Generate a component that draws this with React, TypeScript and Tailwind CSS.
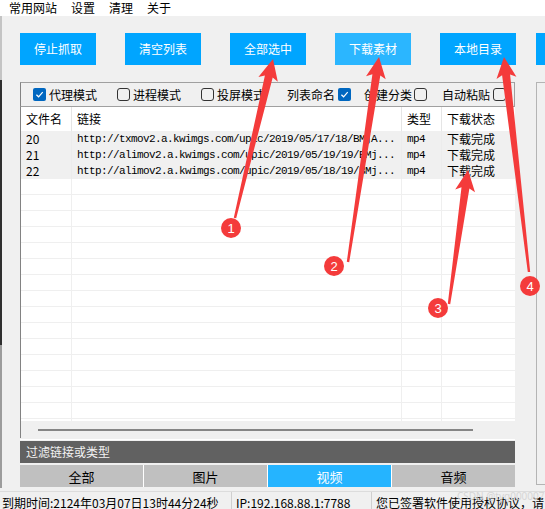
import React from 'react';

type Pt = [number, number];

const rows = [
  { id: '20', url: 'http://txmov2.a.kwimgs.com/upic/2019/05/17/18/BMjA...', type: 'mp4', status: '下载完成' },
  { id: '21', url: 'http://alimov2.a.kwimgs.com/upic/2019/05/19/19/BMj...', type: 'mp4', status: '下载完成' },
  { id: '22', url: 'http://alimov2.a.kwimgs.com/upic/2019/05/18/19/BMj...', type: 'mp4', status: '下载完成' },
];

const buttons = [
  { label: '停止抓取', ml: 'ml-0', active: false },
  { label: '清空列表', ml: 'ml-[29px]', active: false },
  { label: '全部选中', ml: 'ml-[29px]', active: false },
  { label: '下载素材', ml: 'ml-[29px]', active: true },
  { label: '本地目录', ml: 'ml-[29px]', active: false },
  { label: '', ml: 'ml-[20px]', active: false },
];

const tabs = ['全部', '图片', '视频', '音频'];

// callouts: numbered badge, where the shaft starts, where the head points
const callouts: { n: number; c: Pt; tail: Pt; tip: Pt }[] = [
  { n: 1, c: [231, 228], tail: [235, 218], tip: [273, 59] },
  { n: 2, c: [334, 266], tail: [348, 262], tip: [379, 57] },
  { n: 3, c: [438, 308], tail: [449, 304], tip: [468, 170] },
  { n: 4, c: [530, 286], tail: [529, 272], tip: [504, 57] },
];

function arrowPoints(tail: Pt, tip: Pt) {
  const dx = tip[0] - tail[0];
  const dy = tip[1] - tail[1];
  const len = Math.hypot(dx, dy);
  const ux = dx / len;
  const uy = dy / len;
  const nx = -uy;
  const ny = ux;
  const headLen = 18;
  const headHalf = 10;
  const back = 3;
  const shaftTop = 4;
  const shaftBot = 1.2;
  const bx = tip[0] - ux * headLen;
  const by = tip[1] - uy * headLen;
  const pts: Pt[] = [
    tip,
    [bx + nx * headHalf - ux * back, by + ny * headHalf - uy * back],
    [bx + nx * shaftTop, by + ny * shaftTop],
    [tail[0] + nx * shaftBot, tail[1] + ny * shaftBot],
    [tail[0] - nx * shaftBot, tail[1] - ny * shaftBot],
    [bx - nx * shaftTop, by - ny * shaftTop],
    [bx - nx * headHalf - ux * back, by - ny * headHalf - uy * back],
  ];
  return pts.map((p) => `${p[0].toFixed(1)},${p[1].toFixed(1)}`).join(' ');
}

function Check({ on }: { on: boolean }) {
  if (on) {
    return (
      <span className="w-[13px] h-[13px] shrink-0 rounded-[2px] bg-[#0067c0] flex items-center justify-center">
        <svg width="9" height="9" viewBox="0 0 9 9">
          <path d="M1.4 4.7 L3.6 6.8 L7.7 2.2" stroke="white" strokeWidth="1.2" fill="none" />
        </svg>
      </span>
    );
  }
  return <span className="block w-[13px] h-[13px] shrink-0 rounded-[3px] border border-[#333]" />;
}

function Cells({ cells, line }: { cells: React.ReactNode[]; line: string }) {
  const widths = ['w-[50px] pl-[5px]', 'w-[330px] pl-[5px] border-l', 'w-[40px] pl-[5px] border-l', 'w-[74px] pl-[5px] border-l'];
  return (
    <>
      {cells.map((c, i) => (
        <div key={i} className={`${widths[i]} ${line} h-full flex items-center overflow-hidden whitespace-nowrap`}>
          {c}
        </div>
      ))}
    </>
  );
}

export default function App() {
  return (
    <div className="relative w-[545px] h-[509px] overflow-hidden bg-[#f0f0f0] text-[12px] text-black leading-none font-['Noto_Sans_CJK_SC',sans-serif]">
      {/* menu */}
      <div className="h-[16px] bg-white flex items-center pl-[9px] gap-[14px]">
        <span>常用网站</span>
        <span>设置</span>
        <span>清理</span>
        <span>关于</span>
      </div>

      <div className="h-[472px] flex">
        {/* window edge */}
        <div className="w-[2px] flex flex-col">
          <div className="h-[64px] bg-[#c4c4c4]" />
          <div className="h-[265px] bg-[#2f2f2f]" />
          <div className="flex-1 bg-[#9c9c9c]" />
        </div>

        <div className="w-[543px] flex flex-col">
          {/* toolbar */}
          <div className="h-[66px] pt-[17px] pl-[18px] flex items-start">
            {buttons.map((b, i) => (
              <div
                key={i}
                className={`${b.ml} w-[76px] h-[32px] shrink-0 flex items-center justify-center text-white ${b.active ? 'bg-[#2bb6ff]' : 'bg-[#00a5ff]'}`}
              >
                {b.label}
              </div>
            ))}
          </div>

          <div className="h-[406px] flex">
            <div className="w-[18px]" />

            <div className="w-[495px] flex flex-col">
              {/* options */}
              <div className="h-[25px] border border-[#a0a0a0] border-l-[#828282]">
                <div className="w-[484px] h-full overflow-hidden flex items-center pl-[12px] whitespace-nowrap">
                  <Check on />
                  <span className="ml-[3px]">代理模式</span>
                  <span className="ml-[20px]"><Check on={false} /></span>
                  <span className="ml-[3px]">进程模式</span>
                  <span className="ml-[20px]"><Check on={false} /></span>
                  <span className="ml-[3px]">投屏模式</span>
                  <span className="ml-[22px]">列表命名</span>
                  <span className="ml-[3px]"><Check on /></span>
                  <span className="ml-[13px]">创建分类</span>
                  <span className="ml-[2px]"><Check on={false} /></span>
                  <span className="ml-[15px]">自动粘贴</span>
                  <span className="ml-[3px]"><Check on={false} /></span>
                </div>
              </div>

              {/* list */}
              <div className="h-[331px] flex flex-col border-l border-[#828282]">
                <div className="h-[24px] flex bg-white">
                  <Cells line="border-[#e5e5e5]" cells={['文件名', '链接', '类型', '下载状态']} />
                </div>
                {rows.map((r) => (
                  <div key={r.id} className="h-[16px] flex bg-[#f0f0f0]">
                    <Cells
                      line="border-[#ececec]"
                      cells={[
                        r.id,
                        <span className="font-['Liberation_Mono',monospace] text-[11px] tracking-[-0.6px]">{r.url}</span>,
                        <span className="font-['Liberation_Mono',monospace] text-[11px] tracking-[-0.6px]">{r.type}</span>,
                        r.status,
                      ]}
                    />
                  </div>
                ))}
                {Array.from({ length: 15 }).map((_, i) => (
                  <div key={i} className="h-[16px] flex bg-white border-b border-[#efefef]">
                    <Cells line="border-[#efefef]" cells={['', '', '', '']} />
                  </div>
                ))}
                <div className="h-[2px] flex bg-white">
                  <Cells line="border-[#efefef]" cells={['', '', '', '']} />
                </div>
                {/* horizontal scrollbar */}
                <div className="h-[17px] flex items-center pl-[17px] bg-[#f0f0f0]">
                  <div className="w-[435px] h-[2px] bg-[#868686]" />
                </div>
              </div>

              <div className="h-[3px] border-y border-[#f0f0f0] bg-white" />

              {/* filter */}
              <div className="h-[22px] bg-[#616161] flex items-center pl-[6px] text-[#f2f2f2]">过滤链接或类型</div>

              <div className="h-[2px]" />

              {/* type tabs */}
              <div className="h-[22px] flex gap-[1px] bg-white">
                {tabs.map((t) => (
                  <div
                    key={t}
                    className={`flex-1 flex items-center justify-center text-[13px] ${t === '视频' ? 'bg-[#25b4ff] text-white' : 'bg-[#c0c0c0] text-black'}`}
                  >
                    {t}
                  </div>
                ))}
              </div>
            </div>

            {/* side group box */}
            <div className="w-[30px] pl-[21px]">
              <div className="h-[403px] border-l border-t border-b border-[#b4b4b4]" />
            </div>
          </div>
        </div>
      </div>

      {/* status bar */}
      <div className="h-[21px] pt-[3px]">
        <div className="h-[22px] flex border-t border-[#dcdcdc] whitespace-nowrap">
          <div className="w-[232px] pl-[2px] flex items-center border-r border-[#cfcfcf]">到期时间:2124年03月07日13时44分24秒</div>
          <div className="w-[140px] pl-[4px] flex items-center border-r border-[#cfcfcf]">IP:192.168.88.1:7788</div>
          <div className="flex-1 pl-[4px] flex items-center overflow-hidden">您已签署软件使用授权协议，请</div>
        </div>
      </div>

      <div className="absolute left-[457px] top-[491px] text-[10px] text-[#d0d0d0] font-['Noto_Sans',sans-serif] opacity-80">
        CSDN @tyq000007
      </div>

      {/* red callout arrows */}
      <svg className="absolute inset-0 pointer-events-none" width="545" height="509" viewBox="0 0 545 509">
        {callouts.map((a) => (
          <g key={a.n}>
            <polygon points={arrowPoints(a.tail, a.tip)} fill="#f43b3b" />
            <circle cx={a.c[0]} cy={a.c[1]} r="10" fill="#f43b3b" />
            <text
              x={a.c[0]}
              y={a.c[1] + 4.5}
              textAnchor="middle"
              fontSize="13"
              fill="white"
              fontFamily="Liberation Sans, sans-serif"
            >
              {a.n}
            </text>
          </g>
        ))}
      </svg>
    </div>
  );
}
